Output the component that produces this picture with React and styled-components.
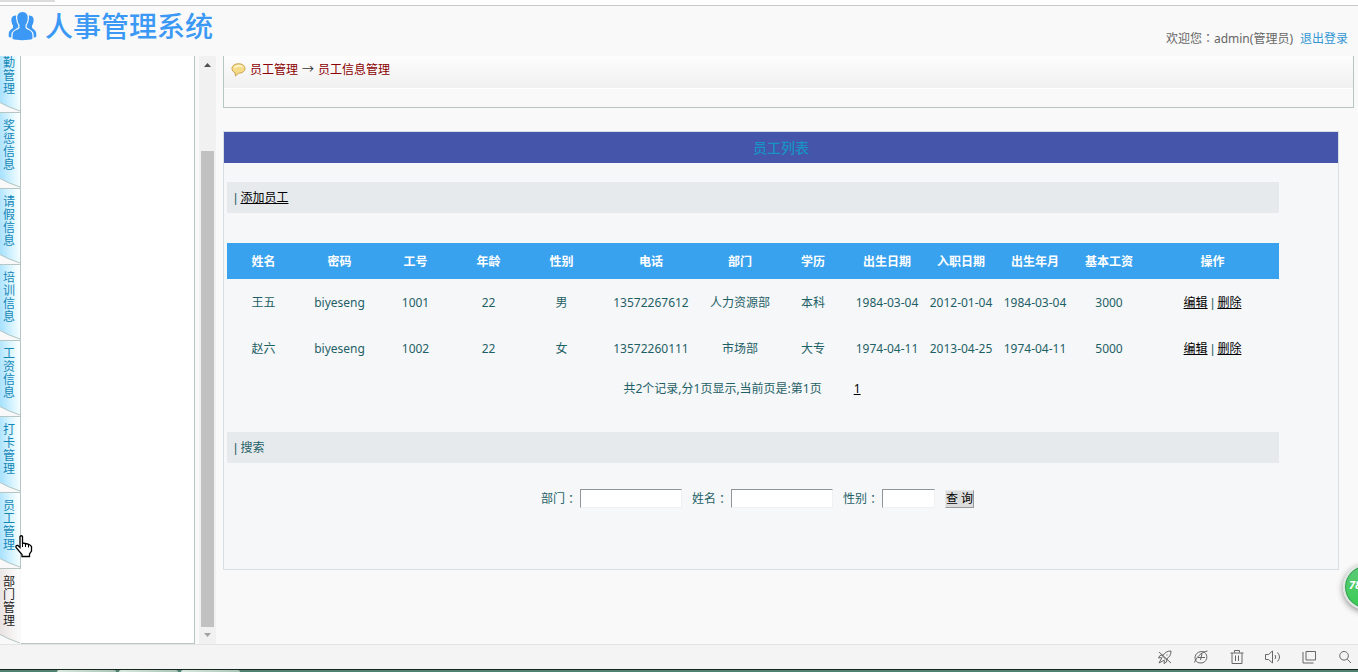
import React from 'react';
import styled, { createGlobalStyle, ThemeProvider } from 'styled-components';

const theme = {
  colors: {
    brand: '#3b99f5',
    title: '#4455aa',
    tableHead: '#39a2ef',
    text: '#1f5f66',
    line: '#b5c6c3',
    page: '#f9f9f9',
    card: '#f5f7f9',
    strip: '#e6eaed',
  },
};

const GlobalStyle = createGlobalStyle`
  * {
    box-sizing: border-box;
  }

  body {
    margin: 0;
    font-family: 'Noto Sans', 'Noto Sans CJK SC', sans-serif;
    font-size: 12px;
    line-height: 16px;
    color: ${({ theme }) => theme.colors.text};
    background: ${({ theme }) => theme.colors.page};
  }
`;

const Shell = styled.div`
  position: relative;
  display: flex;
  flex-direction: column;
  height: 100vh;
  overflow: hidden;
`;

const BrowserEdge = styled.div`
  flex: none;
  height: 6px;
  background: #fff;
  border-bottom: 1px solid #c9c9c9;

  &::before {
    content: '';
    display: block;
    width: 55px;
    height: 2px;
    background: #dcdcdc;
  }
`;

const Header = styled.header`
  flex: none;
  display: flex;
  justify-content: space-between;
  height: 50px;
  padding: 0 10px 0 8px;
`;

const Brand = styled.h1`
  display: flex;
  align-items: center;
  gap: 8px;
  height: 40px;
  margin: 0;
  font-size: 28px;
  line-height: 40px;
  font-weight: 500;
  color: ${({ theme }) => theme.colors.brand};
`;

const Welcome = styled.p`
  display: flex;
  gap: 7px;
  align-self: flex-end;
  margin: 0;
  padding-bottom: 9px;
  color: #666;

  a {
    color: #3397d3;
    text-decoration: none;
  }
`;

/* the TC face centres the full-width colon in its cell */
const Colon = styled.span`
  font-family: 'Noto Sans CJK TC', sans-serif;
  line-height: 1;
`;

const Divider = styled.span`
  font-family: 'Liberation Sans', sans-serif;
`;

const Body = styled.div`
  flex: 1;
  display: flex;
  min-height: 0;
`;

const Tabs = styled.nav`
  flex: none;
  display: flex;
  flex-direction: column;
  justify-content: flex-end;
  width: 21px;
  overflow: hidden;
`;

const Tab = styled.a`
  position: relative;
  flex: none;
  height: 76px;
  padding: 7px 0 0 3px;
  line-height: 13px;
  text-decoration: none;
  color: ${({ $active }) => ($active ? '#222' : '#1487b8')};

  svg {
    position: absolute;
    inset: 0;
  }

  span {
    position: relative;
    display: block;
    width: 12px;
    word-break: break-all;
  }
`;

const SidePanel = styled.aside`
  flex: none;
  width: 174px;
  background: #fff;
  border: solid ${({ theme }) => theme.colors.line};
  border-width: 0 1px 1px 0;
`;

const Scrollbar = styled.div`
  flex: none;
  display: flex;
  flex-direction: column;
  align-items: center;
  justify-content: space-between;
  width: 17px;
  margin-left: 4px;
  padding: 7px 0;
  background: #f1f1f1;
`;

const Thumb = styled.div`
  flex: 1;
  width: 13px;
  margin: 84px 0 6px;
  background: #c1c1c1;
`;

const Main = styled.main`
  flex: 1;
  min-width: 0;
  padding: 0 4px 0 7px;
`;

const Crumbs = styled.div`
  height: 52px;
  border: solid ${({ theme }) => theme.colors.line};
  border-width: 0 1px 1px;
`;

const CrumbBar = styled.div`
  display: flex;
  align-items: center;
  gap: 4px;
  height: 33px;
  padding: 0 0 4px 7px;
  border-bottom: 1px solid #fff;
  background: linear-gradient(#fdfdfd, #f0f0f0);
  color: #8b0000;

  i {
    font-style: normal;
    color: #333;
  }
`;

const Card = styled.section`
  margin: 23px 15px 0 0;
  padding-bottom: 61px;
  border: 1px solid #d6dee6;
  background: ${({ theme }) => theme.colors.card};
`;

const CardTitle = styled.h2`
  margin: 0;
  font-size: 14px;
  line-height: 31px;
  font-weight: 500;
  text-align: center;
  color: #1893c4;
  background: ${({ theme }) => theme.colors.title};
`;

const CardBody = styled.div`
  padding: 19px 59px 0 3px;
`;

const Strip = styled.div`
  height: 31px;
  padding: 0 7px;
  line-height: 31px;
  background: ${({ theme }) => theme.colors.strip};
`;

const TextLink = styled.a`
  color: #000;
  text-decoration: underline;
`;

const Table = styled.table`
  width: 100%;
  margin-top: 30px;
  table-layout: fixed;
  border-collapse: collapse;
  text-align: center;

  th,
  td {
    padding: 2px 0 0;
    white-space: nowrap;
  }

  th {
    height: 36px;
    color: #fff;
    font-weight: 700;
    background: ${({ theme }) => theme.colors.tableHead};
  }

  td {
    height: 46px;
  }
`;

const Pager = styled.div`
  display: flex;
  justify-content: center;
  gap: 32px;
  padding: 10px 22px 35px 0;
`;

const SearchForm = styled.form`
  display: flex;
  align-items: center;
  justify-content: center;
  gap: 10px;
  padding: 26px 0 0 9px;

  label {
    display: flex;
    align-items: center;
  }
`;

const Field = styled.input`
  width: ${({ $width }) => $width}px;
  height: 19px;
  margin-left: 3px;
  padding: 0 2px;
  font: inherit;
  background: #fff;
  border: 1px solid;
  border-color: #8f9599 #eef0f2 #eef0f2 #8f9599;
`;

const Submit = styled.button`
  height: 18px;
  padding: 0;
  font: inherit;
  line-height: 15px;
  color: #000;
  background: #dcdcdc;
  border: 1px solid;
  border-color: #e8e8e8 #999 #999 #e8e8e8;
`;

const StatusBar = styled.footer`
  flex: none;
  display: flex;
  justify-content: flex-end;
  align-items: center;
  gap: 20px;
  height: 25px;
  padding-right: 5px;
  border-top: 1px solid #e4e4e4;
  background: #f4f4f4;
`;

const IconButton = styled.button`
  display: flex;
  padding: 0;
  border: 0;
  background: none;
  color: #666;
`;

const Taskbar = styled.div`
  flex: none;
  display: flex;
  gap: 3px;
  height: 3px;
  padding-left: 57px;
  border-top: 1px solid #14261f;
  background: #4f8271;
`;

const Task = styled.div`
  width: 59px;
  border-radius: 2px 2px 0 0;
  background: linear-gradient(90deg, #dbe8e0, #a9c4b5);
`;

const Ball = styled.div`
  position: absolute;
  right: -31px;
  bottom: 62px;
  width: 46px;
  height: 46px;
  padding-left: 4px;
  border: 2px solid #dfe5e1;
  border-radius: 50%;
  background: linear-gradient(#5fca78, #38cc52);
  box-shadow: inset 0 0 0 1px #2f9a50, 0 2px 6px rgba(0, 0, 0, 0.45);
  color: #fff;
  font-size: 11px;
  line-height: 38px;
  font-weight: 700;
  font-style: italic;
`;

const Pointer = styled.svg`
  position: absolute;
  left: 15px;
  top: 535px;
`;

const tabs = ['考勤管理', '奖惩信息', '请假信息', '培训信息', '工资信息', '打卡管理', '员工管理', '部门管理'];

const columns = [
  ['姓名', 73],
  ['密码', 79],
  ['工号', 73],
  ['年龄', 73],
  ['性别', 73],
  ['电话', 106],
  ['部门', 72],
  ['学历', 74],
  ['出生日期', 74],
  ['入职日期', 74],
  ['出生年月', 74],
  ['基本工资', 74],
  ['操作', 133],
];

const rows = [
  ['王五', 'biyeseng', '1001', '22', '男', '13572267612', '人力资源部', '本科', '1984-03-04', '2012-01-04', '1984-03-04', '3000'],
  ['赵六', 'biyeseng', '1002', '22', '女', '13572260111', '市场部', '大专', '1974-04-11', '2013-04-25', '1974-04-11', '5000'],
];

const fields = [
  { label: '部门', name: 'department', width: 102 },
  { label: '姓名', name: 'name', width: 102 },
  { label: '性别', name: 'gender', width: 53 },
];

const icons = [
  {
    name: '加速',
    path: 'M14 2c-4 0-6 1.500-8.500 5L9 10.500C12.500 8 14 6 14 2zM6 6L3 6.500 1.500 9l3-.5M10 10l-.5 3L7 14.500l.5-3M5 8.500L2 14l5.500-3M2 3l12 11M10 5.500v1',
  },
  {
    name: '极速模式',
    path: 'M3 12C-.5 6 6 1 11 3c5 3 3 11-3 11-3 0-4-1-5-2zM1.500 13.500C3 9 8 3 14.500 2M5 8.500h7M9 4.500L7.500 11',
  },
  { name: '清理', path: 'M1.500 4h13M5.500 3.500v-2h5v2M3 4v10.500h10V4M6.500 6.500v5.500M9.500 6.500v5.500' },
  { name: '声音', path: 'M.5 5.500h3L7.500 2v12L3.500 10.500h-3zM10 6q1.500 2 0 4M12.500 3.500q4 4.500 0 9' },
  { name: '窗口', path: 'M5 2.500h9.500V11H5zM2 3v11h10.500' },
  { name: '缩放', path: 'M7 2.500a4.300 4.300 0 1 0 .1 0M10.200 10.200L14 14' },
];

const PeopleLogo = () => (
  <svg width="29" height="30" viewBox="0 0 29 30" fill="currentColor" aria-hidden="true">
    <path d="M8.500 4.500C4.500 4 2.800 7 3.500 10.500c.3 2 .8 3 1.500 4v2.300C4 18.500 1.300 19 .9 21.500.6 23 .6 24.500.8 26q3 1 6 1L12 15zM20.500 4.500c4-.5 5.700 2.500 5 6-.3 2-.8 3-1.500 4v2.300c1 1.700 3.700 2.200 4.100 4.700.3 1.500.3 3 .1 4.500q-3 1-6 1L17 15z" />
    <path
      d="M14.500 1c4 0 5.500 3 5.200 6.500-.2 3-1.200 5.200-2.200 6.500v3c1.500 1.800 5.500 2.200 6.500 5 .5 1.500.5 4.500.3 6-3 1.500-16.600 1.500-19.600 0-.2-1.500-.2-4.500.3-6 1-2.800 5-3.200 6.500-5v-3c-1-1.300-2-3.500-2.200-6.500C9 4 10.500 1 14.500 1z"
      stroke="#f9f9f9"
      strokeWidth="2.500"
      paintOrder="stroke"
    />
  </svg>
);

const TabShape = ({ id, active }) => (
  <svg width="21" height="76" viewBox="0 0 21 76" aria-hidden="true">
    <defs>
      <linearGradient id={id} x1="0" y1="0.600" x2="1" y2="0.400">
        <stop offset="0" stopColor={active ? '#e9e3e3' : '#a9e2ff'} />
        <stop offset="0.550" stopColor={active ? '#f5f2f2' : '#d8f4ff'} />
        <stop offset="1" stopColor={active ? '#fcfcfc' : '#fbffff'} />
      </linearGradient>
    </defs>
    <path d="M0 1H20V75Q8 72 0 66.500z" fill={`url(#${id})`} />
    <path d="M0 66.500Q8 71 20 75" fill="none" stroke="#b5c6c3" />
    {!active && <path d="M20.500 0V76" stroke="#b5c6c3" />}
    <path d="M0 .5H21" stroke="#b5c6c3" />
  </svg>
);

const SpeechBubble = () => (
  <svg width="15" height="14" viewBox="0 0 15 14" aria-hidden="true">
    <path
      d="M7.500.8c3.800 0 6.500 2 6.500 4.700s-2.700 4.700-6.500 4.700L4.500 13 4 9.700C2 8.800 1 7.300 1 5.500 1 2.800 3.700.8 7.500.8z"
      fill="#f6dc88"
      stroke="#c9a24e"
    />
    <path d="M3.500 4.500Q7.500 1 11.500 4" stroke="#fff6d2" strokeWidth="1.500" fill="none" />
  </svg>
);

const App = () => (
  <ThemeProvider theme={theme}>
    <GlobalStyle />
    <Shell>
      <BrowserEdge />
      <Header>
        <Brand>
          <PeopleLogo />
          人事管理系统
        </Brand>
        <Welcome>
          <span>
            欢迎您<Colon>：</Colon>admin(管理员)
          </span>
          <a href="#logout">退出登录</a>
        </Welcome>
      </Header>

      <Body>
        <Tabs>
          {tabs.map((label, index) => (
            <Tab key={label} href={`#tab-${index}`} $active={index === tabs.length - 1}>
              <TabShape id={`tab-fill-${index}`} active={index === tabs.length - 1} />
              <span>{label}</span>
            </Tab>
          ))}
        </Tabs>
        <SidePanel />
        <Scrollbar>
          <svg width="7" height="4" aria-hidden="true">
            <path d="M0 4L3.500 0 7 4z" fill="#505050" />
          </svg>
          <Thumb />
          <svg width="7" height="4" aria-hidden="true">
            <path d="M0 0h7L3.500 4z" fill="#a3a3a3" />
          </svg>
        </Scrollbar>

        <Main>
          <Crumbs>
            <CrumbBar>
              <SpeechBubble />
              <span>员工管理</span>
              <i>→</i>
              <span>员工信息管理</span>
            </CrumbBar>
          </Crumbs>

          <Card>
            <CardTitle>员工列表</CardTitle>
            <CardBody>
              <Strip>
                <Divider>| </Divider>
                <TextLink href="#add">添加员工</TextLink>
              </Strip>

              <Table>
                <colgroup>
                  {columns.map(([name, width]) => (
                    <col key={name} width={width} />
                  ))}
                </colgroup>
                <thead>
                  <tr>
                    {columns.map(([name]) => (
                      <th key={name}>{name}</th>
                    ))}
                  </tr>
                </thead>
                <tbody>
                  {rows.map((row) => (
                    <tr key={row[2]}>
                      {row.map((value, index) => (
                        <td key={columns[index][0]}>{value}</td>
                      ))}
                      <td>
                        <TextLink href="#edit">编辑</TextLink>
                        <Divider> | </Divider>
                        <TextLink href="#delete">删除</TextLink>
                      </td>
                    </tr>
                  ))}
                </tbody>
              </Table>

              <Pager>
                <span>共2个记录,分1页显示,当前页是:第1页</span>
                <TextLink href="#page-1">1</TextLink>
              </Pager>

              <Strip>
                <Divider>| </Divider>
                搜索
              </Strip>

              <SearchForm>
                {fields.map(({ label, name, width }) => (
                  <label key={name}>
                    {label}
                    <Colon>：</Colon>
                    <Field type="text" name={name} $width={width} />
                  </label>
                ))}
                <Submit type="button">查 询</Submit>
              </SearchForm>
            </CardBody>
          </Card>
        </Main>
      </Body>

      <StatusBar>
        {icons.map(({ name, path }) => (
          <IconButton key={name} type="button" aria-label={name}>
            <svg width="16" height="16" viewBox="0 0 16 16" fill="none" stroke="currentColor">
              <path d={path} />
            </svg>
          </IconButton>
        ))}
      </StatusBar>
      <Taskbar>
        <Task />
        <Task />
        <Task />
      </Taskbar>

      <Ball>78</Ball>
      <Pointer width="18" height="23" viewBox="0 0 18 23" aria-hidden="true">
        <path
          d="M5 1.500Q6.500 0 7.500 1.500V8l2.500.5 2.500.5 2.500 1 1.500 1.500V16L14.500 19v2.500H7V19.500L1 12.500Q.5 10 3 10.500L5 12.500z"
          fill="#fff"
          stroke="#000"
          strokeWidth="1.300"
        />
        <path d="M7.500 8v4M10.500 8.500v3.500M13.500 9.500v3" stroke="#000" fill="none" />
      </Pointer>
    </Shell>
  </ThemeProvider>
);

export default App;
